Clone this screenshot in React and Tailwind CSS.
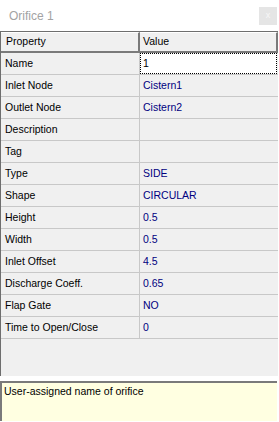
import React from 'react';

const rows = [
  ['Name', '1'],
  ['Inlet Node', 'Cistern1'],
  ['Outlet Node', 'Cistern2'],
  ['Description', ''],
  ['Tag', ''],
  ['Type', 'SIDE'],
  ['Shape', 'CIRCULAR'],
  ['Height', '0.5'],
  ['Width', '0.5'],
  ['Inlet Offset', '4.5'],
  ['Discharge Coeff.', '0.65'],
  ['Flap Gate', 'NO'],
  ['Time to Open/Close', '0'],
];

export default function App() {
  return (
    <div className="w-[279px] h-[422px] bg-white flex flex-col overflow-hidden font-['Liberation_Sans',Arial,sans-serif] text-[10.5px] text-black">
      {/* Title bar */}
      <div className="h-[31px] shrink-0 flex items-center justify-between pl-[9px] pr-[2px]">
        <span className="text-[12px] text-[#a3a3a3]">Orifice 1</span>
        <div className="w-[18px] h-[18px] bg-[#e5e5e5] flex items-center justify-center text-[9px] leading-none text-[#f7f7f7]">
          x
        </div>
      </div>

      {/* Property grid */}
      <div className="h-[345px] shrink-0 mr-[1px] border-l border-t border-[#6e6e6e] bg-[#f0f0f0] flex flex-col">
        <div className="h-[21px] shrink-0 flex border-b-2 border-[#7a7a7a]">
          <div className="w-[139px] shrink-0 flex items-center pl-[5px] border-r-2 border-[#7a7a7a] border-t border-t-white">
            Property
          </div>
          <div className="flex-1 flex items-center pl-[3px] border-r-2 border-[#7a7a7a] border-t border-t-white">
            Value
          </div>
        </div>

        {rows.map(([label, value], idx) => (
          <div key={label} className="h-[22px] shrink-0 flex border-b border-[#c8c8c8]">
            <div className="w-[139px] shrink-0 flex items-center pl-[4px] border-r border-[#c8c8c8]">
              {label}
            </div>
            {idx === 0 ? (
              <div className="flex-1 flex items-center pl-[2px] mr-[1px] bg-white border border-dotted border-black">
                {value}
              </div>
            ) : (
              <div className="flex-1 flex items-center pl-[3px] text-[#000080]">
                {value}
              </div>
            )}
          </div>
        ))}

        <div className="flex-1" />
      </div>

      <div className="h-[5px] shrink-0" />

      {/* Description box */}
      <div className="h-[40px] shrink-0 mr-[2px] bg-[#ffffe1] border-l-2 border-t-2 border-[#7a7a7a] pl-[2px] pt-[2px] leading-[13px]">
        User-assigned name of orifice
      </div>
    </div>
  );
}
